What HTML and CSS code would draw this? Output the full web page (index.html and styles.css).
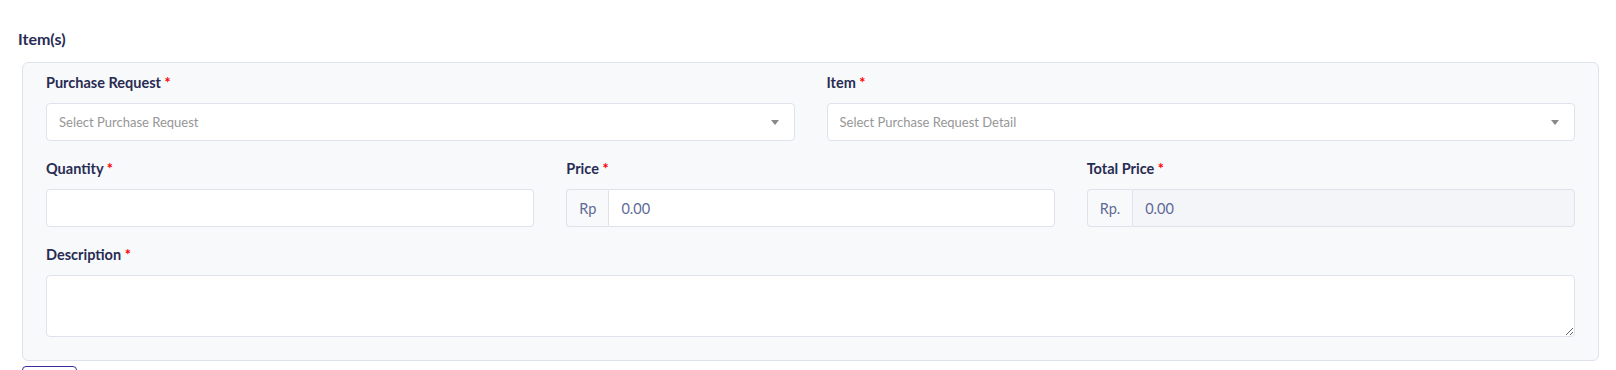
FILE: index.html
```html
<!DOCTYPE html>
<html lang="en">
<head>
    <meta charset="UTF-8">
    <meta name="viewport" content="width=device-width, initial-scale=1.0">
    <title>Purchase Order - Items</title>
    <link rel="stylesheet" href="styles.css">
</head>
<body>
    <div class="page">
        <h6 class="section-title">Item(s)</h6>

        <div class="item-card">
            <div class="form-row cols-2">
                <div class="form-group">
                    <label>Purchase Request <span class="req">*</span></label>
                    <div class="select-box">
                        <span class="placeholder">Select Purchase Request</span>
                        <span class="caret"></span>
                    </div>
                </div>
                <div class="form-group">
                    <label>Item <span class="req">*</span></label>
                    <div class="select-box">
                        <span class="placeholder">Select Purchase Request Detail</span>
                        <span class="caret"></span>
                    </div>
                </div>
            </div>

            <div class="form-row cols-3">
                <div class="form-group">
                    <label>Quantity <span class="req">*</span></label>
                    <input type="text" class="form-control">
                </div>
                <div class="form-group">
                    <label>Price <span class="req">*</span></label>
                    <div class="input-group">
                        <span class="addon">Rp</span>
                        <input type="text" class="form-control" value="0.00">
                    </div>
                </div>
                <div class="form-group">
                    <label>Total Price <span class="req">*</span></label>
                    <div class="input-group">
                        <span class="addon">Rp.</span>
                        <input type="text" class="form-control" value="0.00" disabled>
                    </div>
                </div>
            </div>

            <div class="form-group last">
                <label>Description <span class="req">*</span></label>
                <textarea class="form-control" rows="2"></textarea>
            </div>
        </div>

        <!-- add another item row -->
        <button class="btn-add" aria-label="Add item">
            <svg width="14" height="14" viewBox="0 0 14 14">
                <path d="M7 2v10M2 7h10" stroke="#3a2c9c" stroke-width="2" fill="none"/>
            </svg>
        </button>
    </div>
</body>
</html>
```

FILE: styles.css
```css
:root {
    --label-navy: #282c53;
    --muted-blue: #5f6a95;
    --card-bg: #f8f9fb;
    --line: #dee2eb;
    --required: #ff0000;
}

body {
    font-family: Lato, 'Liberation Sans', sans-serif;
    margin: 0;
    padding: 0;
    background: white;
    color: var(--label-navy);
    overflow: hidden;
}

.page {
    padding: 28px 17px 0 18px;
}

.section-title {
    margin: 0 0 13px;
    font-size: 16px;
    line-height: 21px;
    font-weight: bold;
    color: var(--label-navy);
}

.item-card {
    margin-left: 4px;
    padding: 9px 23px 23px;
    background-color: var(--card-bg);
    border: 1px solid var(--line);
    border-radius: 6px;
}

.form-row {
    display: grid;
    column-gap: 32px;
}

.cols-2 {
    grid-template-columns: 1fr 1fr;
}

.cols-3 {
    grid-template-columns: 1fr 1fr 1fr;
}

.form-group {
    margin-bottom: 17px;
}

.form-group.last {
    margin-bottom: 0;
}

label {
    display: block;
    margin-bottom: 10px;
    font-size: 14.5px;
    line-height: 21px;
    font-weight: bold;
    color: var(--label-navy);
}

.req {
    color: var(--required);
}

.select-box {
    display: flex;
    align-items: center;
    justify-content: space-between;
    height: 38px;
    box-sizing: border-box;
    padding: 0 12px;
    background: white;
    border: 1px solid var(--line);
    border-radius: 4px;
}

.placeholder {
    font-size: 13px;
    color: #969696;
}

.caret {
    width: 0;
    height: 0;
    margin-right: 3px;
    border-style: solid;
    border-width: 5px 4px 0 4px;
    border-color: #888 transparent transparent transparent;
}

.form-control {
    display: block;
    width: 100%;
    height: 38px;
    box-sizing: border-box;
    padding: 0 12px;
    font-family: inherit;
    font-size: 14.5px;
    color: var(--muted-blue);
    background: white;
    border: 1px solid var(--line);
    border-radius: 4px;
    outline: none;
}

.form-control:disabled {
    background-color: #f4f5f9;
    color: var(--muted-blue);
}

textarea.form-control {
    height: 62px;
    padding: 8px 12px;
    resize: vertical;
}

.input-group {
    display: flex;
}

.input-group .addon {
    display: flex;
    align-items: center;
    padding: 0 12px;
    font-size: 14.5px;
    color: var(--muted-blue);
    background-color: var(--card-bg);
    border: 1px solid var(--line);
    border-right: none;
    border-radius: 4px 0 0 4px;
}

.input-group .form-control {
    flex: 1;
    border-radius: 0 4px 4px 0;
}

.btn-add {
    display: block;
    width: 55px;
    height: 34px;
    margin: 5px 0 0 4px;
    padding: 0;
    background: white;
    border: 1px solid #3a2c9c;
    border-radius: 4px;
}
```
